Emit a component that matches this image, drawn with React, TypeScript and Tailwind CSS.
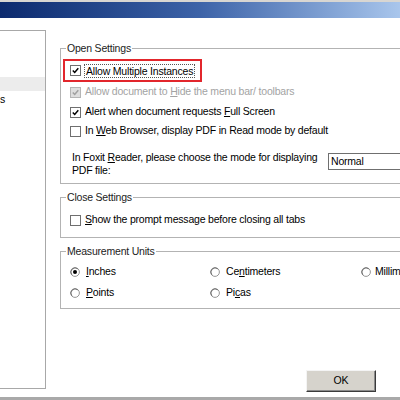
import React from "react";

function Check({ checked, disabled }: { checked?: boolean; disabled?: boolean }) {
  return (
    <span
      className={
        "w-[11px] h-[11px] shrink-0 border flex items-center justify-center " +
        (disabled ? "border-[#b5b5b5] bg-[#dedede]" : "border-[#6f6f6f] bg-white")
      }
    >
      {checked && (
        <svg width="7" height="7" viewBox="0 0 7 7">
          <path
            d="M0.8 3.4 L2.7 5.4 L6.3 1.2"
            fill="none"
            stroke={disabled ? "#a0a0a0" : "#000"}
            strokeWidth="1.5"
          />
        </svg>
      )}
    </span>
  );
}

function Radio({ checked }: { checked?: boolean }) {
  return (
    <svg width="10" height="10" viewBox="0 0 10 10" className="shrink-0">
      <circle cx="5" cy="5" r="4.4" fill="#fff" stroke="#8a8a8a" strokeWidth="0.9" />
      <path d="M1.9 7.8 A4.2 4.2 0 0 1 7.8 1.9" fill="none" stroke="#6a6a6a" strokeWidth="0.9" />
      {checked && <circle cx="5" cy="5" r="2" fill="#000" />}
    </svg>
  );
}

function Group({
  title,
  className,
  children,
}: {
  title: string;
  className?: string;
  children: React.ReactNode;
}) {
  return (
    <fieldset className={"border border-[#b3b3b3] w-[360px] " + (className || "")}>
      <legend className="ml-[5px] px-[1px] leading-[12px] text-[#222]">{title}</legend>
      {children}
    </fieldset>
  );
}

export default function App() {
  return (
    <div className="w-[400px] h-[400px] overflow-hidden bg-white flex flex-col font-['Liberation_Sans',Arial,sans-serif] text-[10.5px] tracking-[-0.2px] text-black">
      <div className="h-[2px] bg-[#d8d6d2] shrink-0" />
      <div className="h-[16px] shrink-0 bg-gradient-to-r from-[#0c2a6e] via-[#3d63a8] to-[#a9c6ec]" />
      <div className="flex flex-1 min-h-0">
        {/* left tree panel */}
        <div className="w-[46px] shrink-0 pt-[12px] pb-[8px] flex flex-col">
          <div className="flex-1 border-t border-r border-b border-[#a8a8a8] flex flex-col">
            <div className="h-[46px]" />
            <div className="h-[14px] bg-[#ececec]" />
            <div className="mt-[2px] h-[14px] flex items-center">s</div>
          </div>
        </div>

        {/* right content */}
        <div className="ml-[14px] w-[360px] shrink-0 pt-[24px] flex flex-col">
          <Group title="Open Settings">
            <div className="pb-[6px]">
              <div className="ml-[2px] mt-[5px] w-[139px] h-[23px] border-2 border-[#e2262c] flex items-center pl-[5px]">
                <Check checked />
                <span className="ml-[3px] border border-dotted border-[#555] px-[1px] leading-[12px] whitespace-nowrap">
                  Allow Multiple Instances
                </span>
              </div>
              <div className="pl-[9px]">
                <div className="mt-[3px] h-[14px] flex items-center gap-[4px] text-[#a3a3a3] whitespace-nowrap">
                  <Check checked disabled />
                  <span>
                    Allow document to <u>H</u>ide the menu bar/ toolbars
                  </span>
                </div>
                <div className="mt-[6px] h-[14px] flex items-center gap-[4px] whitespace-nowrap">
                  <Check checked />
                  <span>
                    Alert when document requests <u>F</u>ull Screen
                  </span>
                </div>
                <div className="mt-[5px] h-[14px] flex items-center gap-[4px] whitespace-nowrap">
                  <Check />
                  <span>
                    In <u>W</u>eb Browser, display PDF in Read mode by default
                  </span>
                </div>
              </div>
              <div className="mt-[13px] pl-[11px] flex">
                <div className="w-[256px] shrink-0 leading-[13px] whitespace-nowrap">
                  In Foxit <u>R</u>eader, please choose the mode for displaying
                  <br />
                  PDF file:
                </div>
                <div className="mt-[2px] w-[100px] h-[17px] border border-[#6f6f6f] bg-white flex items-center pl-[2px]">
                  Normal
                </div>
              </div>
            </div>
          </Group>

          <Group title="Close Settings" className="mt-[7px]">
            <div className="pl-[9px] pb-[10px]">
              <div className="mt-[10px] h-[14px] flex items-center gap-[4px] whitespace-nowrap">
                <Check />
                <span>
                  <u>S</u>how the prompt message before closing all tabs
                </span>
              </div>
            </div>
          </Group>

          <Group title="Measurement Units" className="mt-[7px]">
            <div className="pl-[9px] pb-[8px] grid grid-cols-[140px_151px_auto]">
              <div className="mt-[8px] h-[14px] flex items-center gap-[6px]">
                <Radio checked />
                <span>
                  <u>I</u>nches
                </span>
              </div>
              <div className="mt-[8px] h-[14px] flex items-center gap-[6px]">
                <Radio />
                <span>
                  Ce<u>n</u>timeters
                </span>
              </div>
              <div className="mt-[8px] h-[14px] flex items-center gap-[4px]">
                <Radio />
                <span className="whitespace-nowrap">Millimeters</span>
              </div>
              <div className="mt-[7px] h-[14px] flex items-center gap-[6px]">
                <Radio />
                <span>
                  <u>P</u>oints
                </span>
              </div>
              <div className="mt-[7px] h-[14px] flex items-center gap-[6px]">
                <Radio />
                <span>
                  Pi<u>c</u>as
                </span>
              </div>
            </div>
          </Group>

          <div className="mt-[61px] ml-[246px] w-[70px] h-[22px] bg-[#d6d3cc] border border-t-[#f4f4f4] border-l-[#f4f4f4] border-r-[#3a3a3a] border-b-[#3a3a3a] flex items-center justify-center shadow-[inset_-1px_-1px_0_#8a8a8a]">
            OK
          </div>
        </div>
      </div>
      <div className="h-[3px] shrink-0 bg-[#a9a9a9]" />
    </div>
  );
}
